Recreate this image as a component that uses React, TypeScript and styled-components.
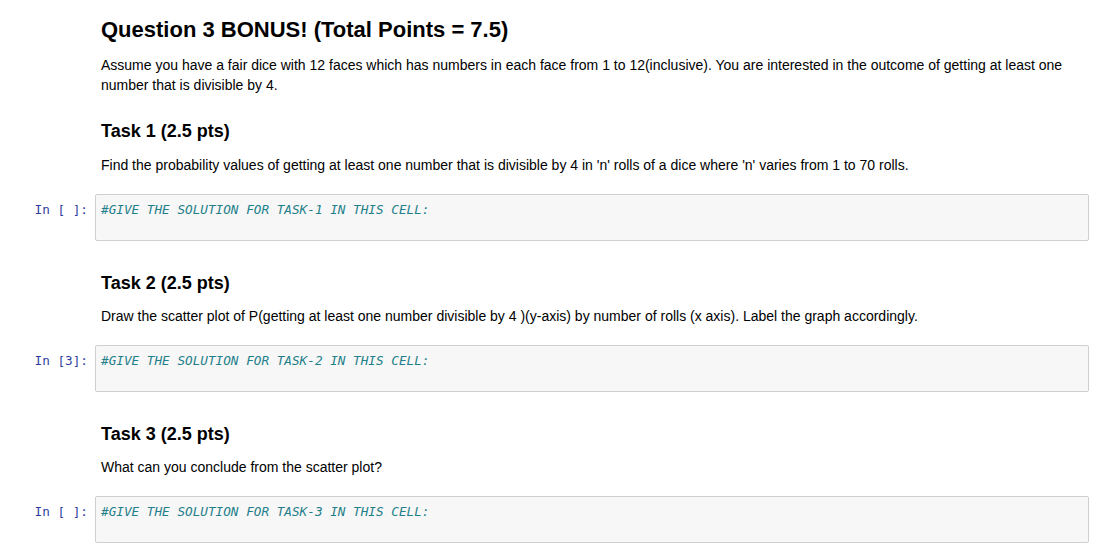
import styled, { createGlobalStyle } from "styled-components"

const GlobalStyle = createGlobalStyle`
  body {
    margin: 0;
    background: #ffffff;
    font-family: "Liberation Sans", Arial, sans-serif;
  }
`

const Notebook = styled.div`
  width: 1098px;
  padding-top: 15px;
`

const Row = styled.div<{ $gap?: number }>`
  display: grid;
  grid-template-columns: 88px 994px;
  column-gap: 7px;
  margin-top: ${({ $gap }) => $gap ?? 0}px;
`

const Prompt = styled.div`
  font-family: "DejaVu Sans Mono", monospace;
  font-size: 12.7px;
  line-height: 17px;
  color: #303f9f;
  text-align: right;
  padding-top: 7px;
  white-space: pre;
`

const Markdown = styled.div`
  padding: 0 6px;
  color: #000;
`

const Title = styled.h1`
  margin: 0;
  font-size: 22px;
  font-weight: bold;
  line-height: 30px;
`

const TaskTitle = styled.h3<{ $gap: number }>`
  margin: ${({ $gap }) => $gap}px 0 0;
  font-size: 18px;
  font-weight: bold;
  line-height: 24px;
`

const Text = styled.p<{ $gap: number }>`
  margin: ${({ $gap }) => $gap}px 0 0;
  font-size: 14px;
  line-height: 20px;
`

const CodeBox = styled.div`
  height: 47px;
  box-sizing: border-box;
  background: #f7f7f7;
  border: 1px solid #cfcfcf;
  border-radius: 2px;
  padding: 6px 5px;
`

const Comment = styled.div`
  font-family: "DejaVu Sans Mono", monospace;
  font-size: 12.7px;
  line-height: 17px;
  font-style: italic;
  color: #1f7f8a;
`

const tasks = [
  {
    title: "Task 1 (2.5 pts)",
    text: "Find the probability values of getting at least one number that is divisible by 4 in 'n' rolls of a dice where 'n' varies from 1 to 70 rolls.",
    prompt: "In [ ]:",
    code: "#GIVE THE SOLUTION FOR TASK-1 IN THIS CELL:",
    gap: 24,
    textGap: 12,
  },
  {
    title: "Task 2 (2.5 pts)",
    text: "Draw the scatter plot of P(getting at least one number divisible by 4 )(y-axis) by number of rolls (x axis). Label the graph accordingly.",
    prompt: "In [3]:",
    code: "#GIVE THE SOLUTION FOR TASK-2 IN THIS CELL:",
    gap: 30,
    textGap: 11,
  },
  {
    title: "Task 3 (2.5 pts)",
    text: "What can you conclude from the scatter plot?",
    prompt: "In [ ]:",
    code: "#GIVE THE SOLUTION FOR TASK-3 IN THIS CELL:",
    gap: 30,
    textGap: 11,
  },
]

export default function App() {
  return (
    <>
      <GlobalStyle />
      <Notebook>
        <Row>
          <div />
          <Markdown>
            <Title>Question 3 BONUS! (Total Points = 7.5)</Title>
            <Text $gap={10}>
              Assume you have a fair dice with 12 faces which has numbers in each face from 1 to 12(inclusive). You are
              interested in the outcome of getting at least one number that is divisible by 4.
            </Text>
          </Markdown>
        </Row>
        {tasks.map((t) => (
          <div key={t.title}>
            <Row>
              <div />
              <Markdown>
                <TaskTitle $gap={t.gap}>{t.title}</TaskTitle>
                <Text $gap={t.textGap}>{t.text}</Text>
              </Markdown>
            </Row>
            <Row $gap={19}>
              <Prompt>{t.prompt}</Prompt>
              <CodeBox>
                <Comment>{t.code}</Comment>
              </CodeBox>
            </Row>
          </div>
        ))}
      </Notebook>
    </>
  )
}
